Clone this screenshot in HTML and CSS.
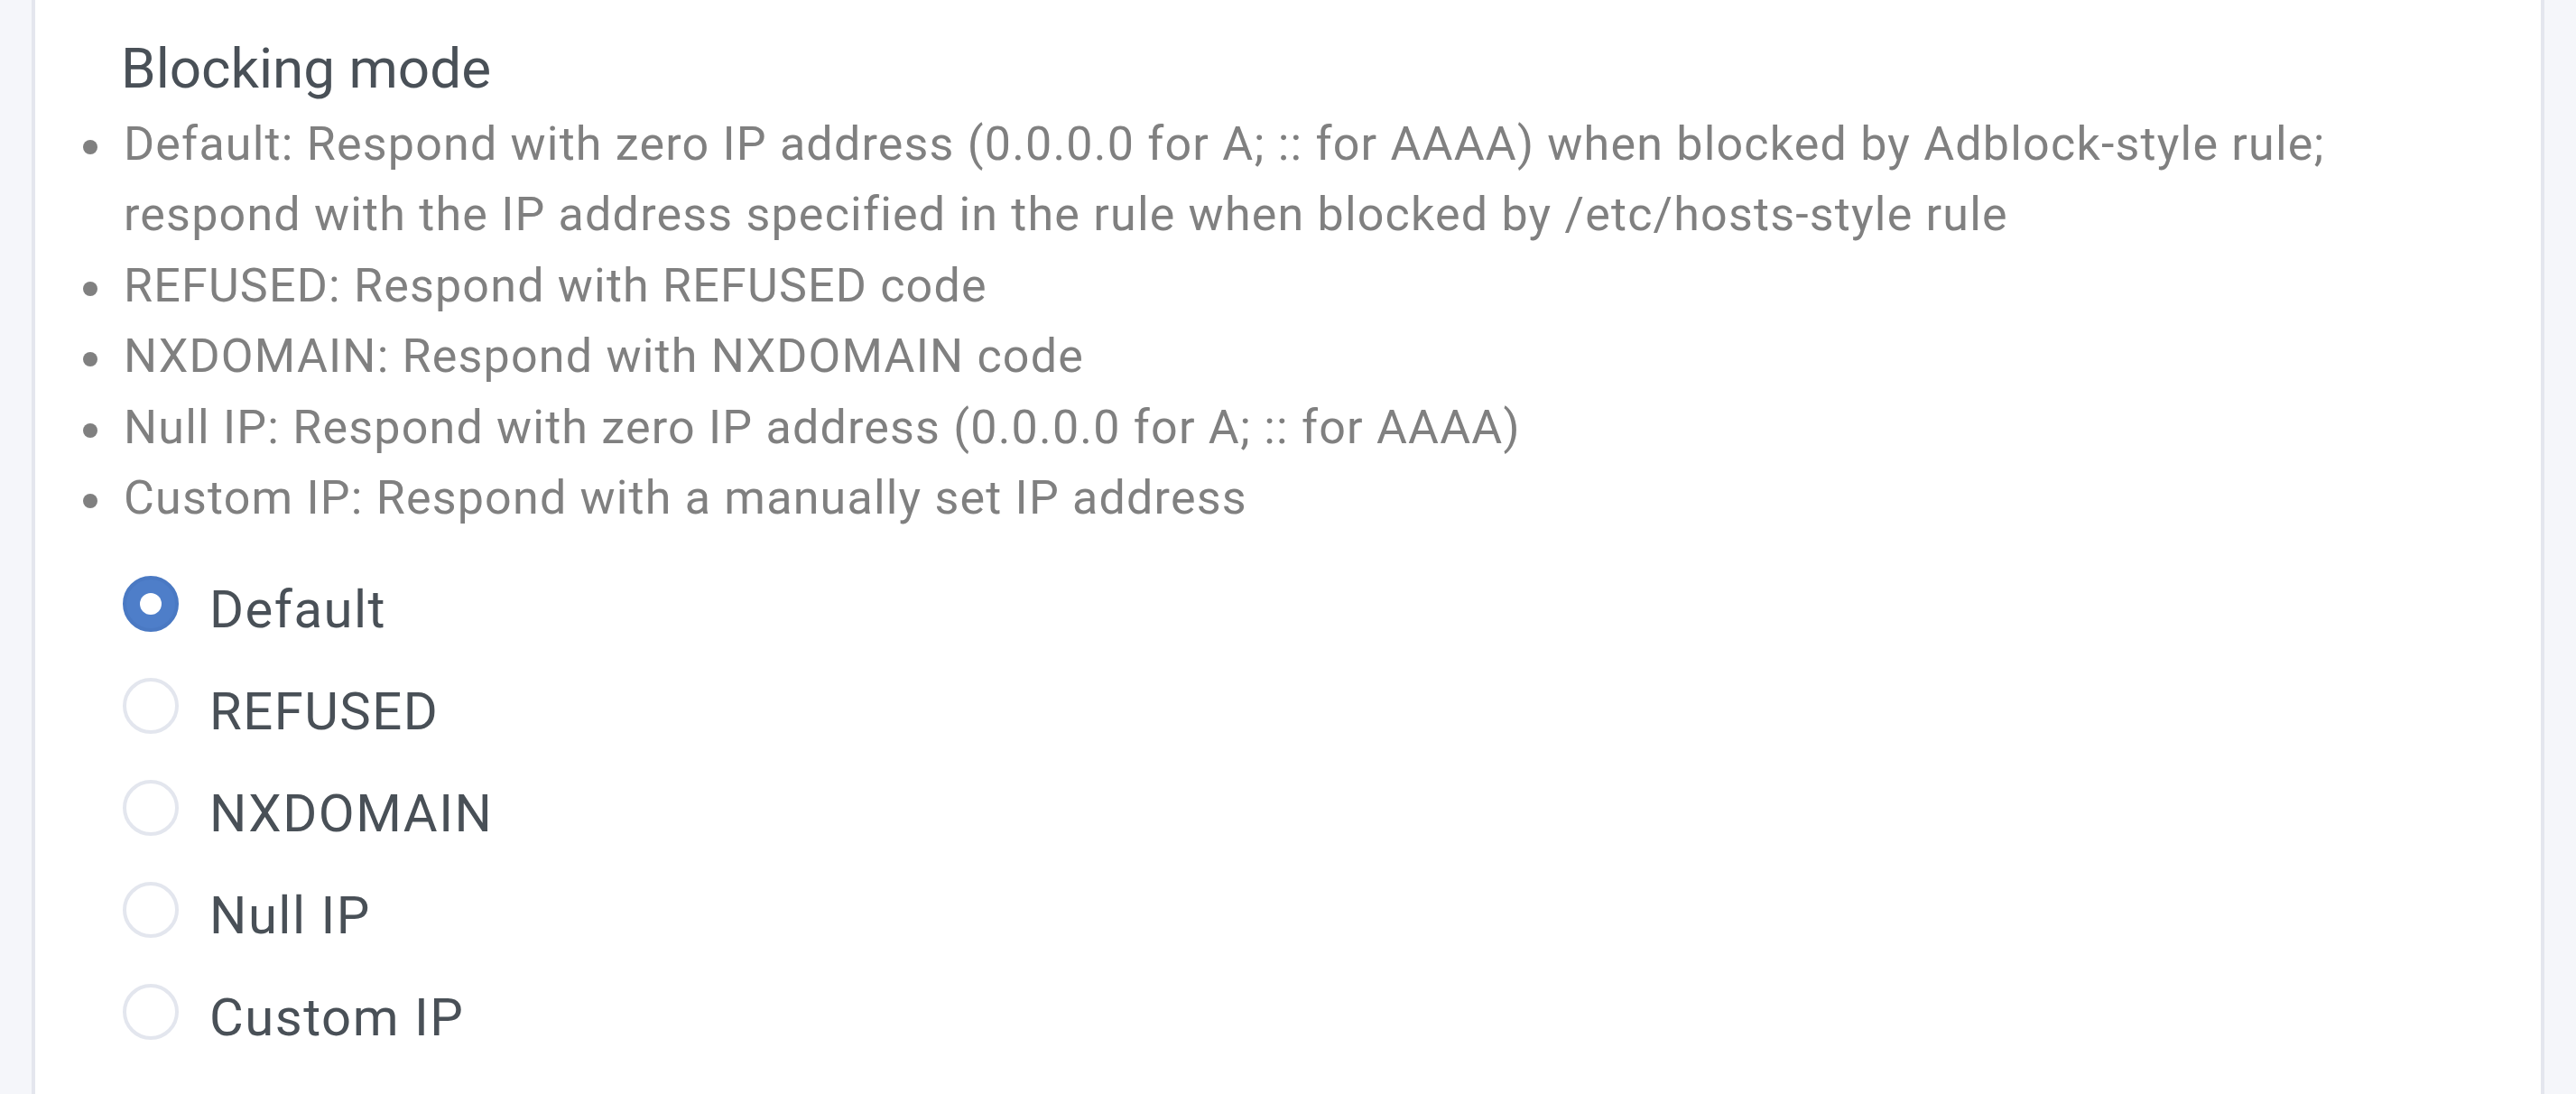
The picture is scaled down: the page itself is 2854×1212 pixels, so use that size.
FILE: index.html
```html
<!DOCTYPE html>
<html lang="en">
<head>
<meta charset="utf-8">
<title>Blocking mode</title>
<link rel="stylesheet" href="styles.css">
</head>
<body>
<div class="page">
  <section class="card">
    <h2 class="title">Blocking mode</h2>
    <ul class="modes">
      <li>Default: Respond with zero IP address (0.0.0.0 for A; :: for AAAA) when blocked by Adblock-style rule; respond with the IP address specified in the rule when blocked by /etc/hosts-style rule</li>
      <li>REFUSED: Respond with REFUSED code</li>
      <li>NXDOMAIN: Respond with NXDOMAIN code</li>
      <li>Null IP: Respond with zero IP address (0.0.0.0 for A; :: for AAAA)</li>
      <li>Custom IP: Respond with a manually set IP address</li>
    </ul>
    <div class="radios">
      <label class="radio"><input type="radio" name="mode" value="default" checked><span class="dot"></span><span class="label">Default</span></label>
      <label class="radio"><input type="radio" name="mode" value="refused"><span class="dot"></span><span class="label">REFUSED</span></label>
      <label class="radio"><input type="radio" name="mode" value="nxdomain"><span class="dot"></span><span class="label">NXDOMAIN</span></label>
      <label class="radio"><input type="radio" name="mode" value="null_ip"><span class="dot"></span><span class="label">Null IP</span></label>
      <label class="radio"><input type="radio" name="mode" value="custom_ip"><span class="dot"></span><span class="label">Custom IP</span></label>
    </div>
  </section>
</div>
</body>
</html>
```

FILE: styles.css
```css
html, body {
  margin: 0;
  padding: 0;
}

body {
  background: #f5f6fa;
  font-family: Roboto, "Liberation Sans", sans-serif;
}

.page {
  padding: 0 35px;
  min-height: 100vh;
  display: flex;
}

.card {
  flex: 1;
  background: #ffffff;
  border-left: 4px solid #e4e6ee;
  border-right: 4px solid #e4e6ee;
  padding: 36px 53px 0 53px;
}

.title {
  margin: 0 0 5px 42px;
  font-size: 62px;
  line-height: 80px;
  font-weight: 400;
  color: #495057;
}

.modes {
  list-style: none;
  margin: 0;
  padding: 0;
  font-size: 52px;
  line-height: 78.4px;
  letter-spacing: 1.2px;
  color: #808080;
}

.modes li {
  display: flex;
}

.modes li::before {
  content: "";
  flex: 0 0 16px;
  width: 16px;
  height: 16px;
  margin-top: 34px;
  margin-right: 29px;
  border-radius: 50%;
  background: #808080;
}

.radios {
  margin-top: 21px;
  padding-left: 44px;
  display: flex;
  flex-direction: column;
}

.radio {
  display: flex;
  align-items: center;
  height: 113px;
  cursor: pointer;
}

.radio input {
  display: none;
}

.dot {
  flex: 0 0 auto;
  box-sizing: border-box;
  width: 62px;
  height: 62px;
  border-radius: 50%;
  border: 4px solid #e3e6ee;
  background: #ffffff;
  display: flex;
  align-items: center;
  justify-content: center;
}

.radio input:checked + .dot {
  background: #4e7ec9;
  border-color: #4a79c3;
}

.radio input:checked + .dot::after {
  content: "";
  width: 24px;
  height: 24px;
  border-radius: 50%;
  background: #ffffff;
}

.label {
  margin-left: 34px;
  padding-top: 12px;
  font-size: 58px;
  line-height: 80px;
  letter-spacing: 1.5px;
  color: #495057;
}
```
